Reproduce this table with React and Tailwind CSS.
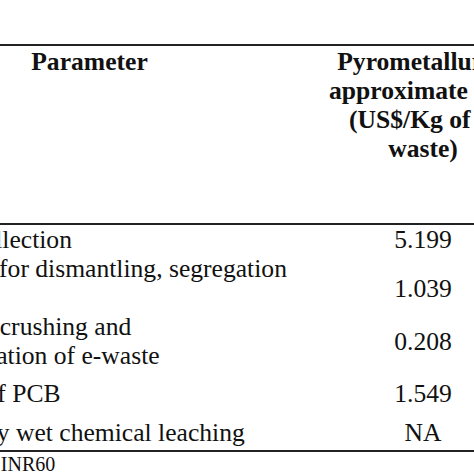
import React from "react";

const rows = [
  { lines: ["Cost of collection"], value: "5.199", pl: "pl-[2px]", cls: "", vcls: "" },
  { lines: ["Expenses for dismantling, segregation", "etc."], value: "1.039", pl: "pl-[8px]", cls: "", vcls: "pt-[10px]" },
  { lines: ["Labor for crushing and", "size separation of e-waste"], value: "0.208", pl: "pl-[8px]", cls: "", vcls: "" },
  { lines: ["Melting of PCB"], value: "1.549", pl: "pl-[9px]", cls: "pt-[9px] pb-[5px]", vcls: "pt-[9px] pb-[5px]" },
  { lines: ["Refining by wet chemical leaching"], value: "NA", pl: "pl-[0px]", cls: "pt-[5px] pb-[3px]", vcls: "pt-[5px] pb-[3px]" },
];

const App = () => {
  return (
    <div className="w-[474px] h-[474px] overflow-hidden bg-white text-[#111] font-['Liberation_Serif',serif]">
      <div className="pt-[44px] -ml-[112px] w-[667px]">
        <table className="table-fixed border-collapse w-[667px] font-['Liberation_Serif',serif]">
          <colgroup>
            <col className="w-[403px]" />
            <col className="w-[264px]" />
          </colgroup>
          <thead>
            <tr className="border-t-2 border-b-2 border-[#222]">
              <th className="h-[179px] align-top pt-[1px] text-center font-bold text-[25.6px] leading-[29px]">
                Parameter
              </th>
              <th className="h-[179px] align-top pt-[1px] text-center font-bold text-[25.6px] leading-[29px]">
                Pyrometallurgy
                <br />
                approximate cost
                <br />
                (US$/Kg of e-
                <br />
                waste)
              </th>
            </tr>
          </thead>
          <tbody className="text-[25.6px] leading-[29px]">
            {rows.map((row, i) => (
              <tr key={i} className={i === rows.length - 1 ? "border-b-2 border-[#222]" : ""}>
                <td className={"text-left whitespace-nowrap " + row.pl + " " + row.cls}>
                  {row.lines.map((l, j) => (
                    <div key={j}>{l}</div>
                  ))}
                </td>
                <td className={"text-center align-middle " + row.vcls}>{row.value}</td>
              </tr>
            ))}
          </tbody>
        </table>
        <p className="pl-[31px] text-[20px] leading-[24px] whitespace-nowrap">*1 US$ = INR60</p>
      </div>
    </div>
  );
};

export default App;
